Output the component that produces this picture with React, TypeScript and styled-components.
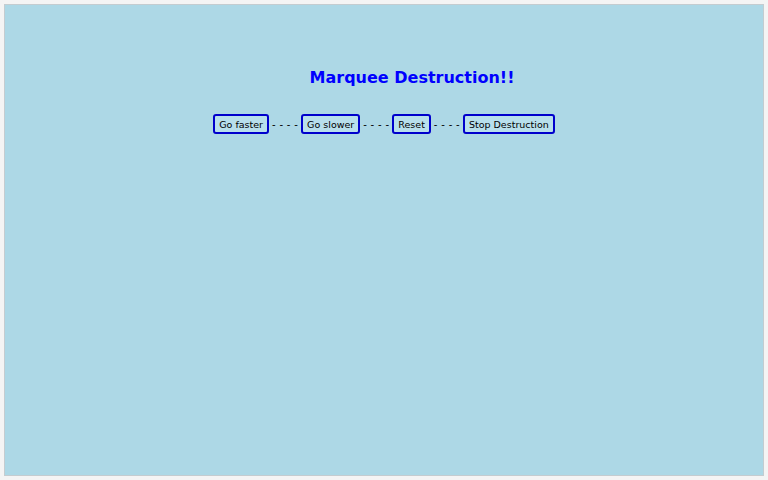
import React from 'react'

import styled, { createGlobalStyle } from 'styled-components'

const GlobalStyle = createGlobalStyle`
  html, body {
    margin: 0;
    padding: 0;
    background: #f4f4f4;
  }
  body {
    font-family: "Comic Sans MS", "DejaVu Sans", sans-serif;
  }
`

const labels = ['Go faster', 'Go slower', 'Reset', 'Stop Destruction']

export default function App() {
  return (
    <>
      <GlobalStyle />
      <Stage>
        <Title>Marquee Destruction!!</Title>
        <Controls>
          {labels.map((label, i) => (
            <React.Fragment key={label}>
              {i > 0 && <Dashes>- - - -</Dashes>}
              <Button>{label}</Button>
            </React.Fragment>
          ))}
        </Controls>
      </Stage>
    </>
  )
}

const Stage = styled.div`
  margin: 4px 4px 0 4px;
  height: 472px;
  box-sizing: border-box;
  border: 1px solid #c4ccd0;
  background: #add8e6;
  display: flex;
  flex-direction: column;
  align-items: center;
`

const Title = styled.h1`
  margin: 59px 0 0 56px;
  font-size: 16px;
  font-weight: bold;
  color: #0000ff;
  line-height: 28px;
`

const Controls = styled.div`
  margin-top: 22px;
  display: flex;
  align-items: center;
  gap: 3px;
`

const Dashes = styled.span`
  font-size: 10px;
  color: #000;
  letter-spacing: 0.3px;
`

const Button = styled.button`
  font-family: inherit;
  font-size: 9.5px;
  color: #000;
  height: 20px;
  padding: 0 4px;
  border: 2px solid #0000cc;
  border-radius: 3px;
  background: #b8dfec;
  cursor: pointer;
`
